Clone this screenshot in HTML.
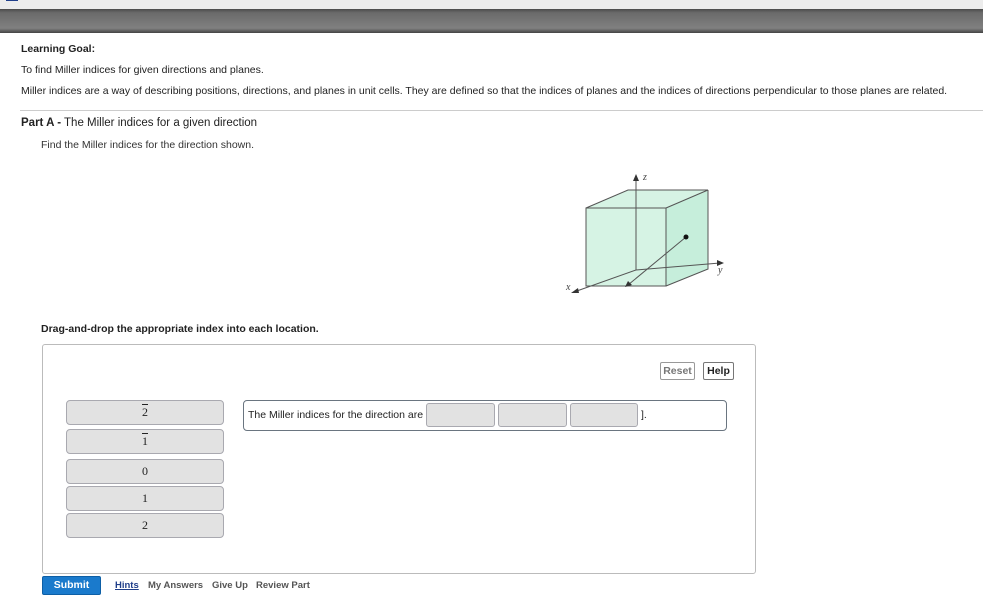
<!DOCTYPE html>
<html><head><style>
body{margin:0;width:983px;height:606px;overflow:hidden;background:#fff;font-family:"Liberation Sans",Arial,sans-serif;position:relative}
.a{position:absolute;white-space:nowrap}
.t{font-size:10.5px;color:#222}
.tile{position:absolute;left:66px;width:156px;height:23px;background:#e2e2e2;border:1px solid #a9a9b0;border-radius:4px;font-family:"Liberation Serif",serif;font-size:12px;text-align:center;line-height:23px;color:#222}
.slot{position:absolute;top:403px;height:22px;background:#e2e2e2;border:1px solid #a9a9b0;border-radius:3px}
.ov{text-decoration:overline}
</style></head><body>
<div class="a" style="left:0;top:0;width:983px;height:9px;background:#ececec"></div>
<div class="a" style="left:6px;top:0;width:12px;height:1px;background:#1f3e8a"></div>
<div class="a" style="left:0;top:9px;width:983px;height:24px;background:linear-gradient(#4a4a4a,#6a6a6a 15%,#808080 80%,#444)"></div>
<div class="a t" style="left:21px;top:43px;font-weight:bold">Learning Goal:</div>
<div class="a t" style="left:21px;top:64px">To find Miller indices for given directions and planes.</div>
<div class="a t" style="left:21px;top:85px">Miller indices are a way of describing positions, directions, and planes in unit cells. They are defined so that the indices of planes and the indices of directions perpendicular to those planes are related.</div>
<div class="a" style="left:20px;top:110px;width:963px;height:1px;background:#ccc"></div>
<div class="a" style="left:21px;top:117px;font-size:11.5px;color:#222"><b>Part A -</b> The Miller indices for a given direction</div>
<div class="a t" style="left:41px;top:139px;color:#333">Find the Miller indices for the direction shown.</div>
<svg class="a" style="left:0;top:0" width="983" height="606">
<polygon points="586,208 628,190 708,190 708,269 666,286 586,286" fill="#d6f3e4"/>
<polygon points="666,208 708,190 708,269 666,286" fill="#c6eedb"/>
<g stroke="#555" stroke-width="1" fill="none">
<polygon points="586,208 666,208 666,286 586,286"/>
<polyline points="586,208 628,190 708,190 666,208"/>
<polyline points="708,190 708,269 666,286"/>
<line x1="636" y1="270" x2="636" y2="178"/>
<line x1="636" y1="270" x2="720" y2="263"/>
<line x1="636" y1="270" x2="574" y2="292"/>
<line x1="686" y1="237" x2="628" y2="285"/>
</g>
<polygon points="636,174 633,181 639,181" fill="#333"/>
<polygon points="724,263 717,260 717,266" fill="#333"/>
<polygon points="571,293 578,288 579,293" fill="#333"/>
<polygon points="625,287 628,281 632,285" fill="#333"/>
<circle cx="686" cy="237" r="2.5" fill="#111"/>
<text x="643" y="180" font-family="Liberation Serif" font-style="italic" font-size="10" fill="#444">z</text>
<text x="718" y="273" font-family="Liberation Serif" font-style="italic" font-size="10" fill="#444">y</text>
<text x="566" y="290" font-family="Liberation Serif" font-style="italic" font-size="10" fill="#444">x</text>
</svg>
<div class="a t" style="left:41px;top:323px;font-weight:bold">Drag-and-drop the appropriate index into each location.</div>
<div class="a" style="left:42px;top:344px;width:712px;height:228px;border:1px solid #bbb;border-radius:3px"></div>
<div class="a" style="left:660px;top:362px;width:33px;height:16px;border:1px solid #999;border-radius:2px;font-size:10.5px;font-weight:bold;color:#777;text-align:center;line-height:16px">Reset</div>
<div class="a" style="left:703px;top:362px;width:29px;height:16px;border:1px solid #777;border-radius:2px;font-size:10.5px;font-weight:bold;color:#222;text-align:center;line-height:16px">Help</div>
<div class="tile" style="top:400px"><span class="ov">2</span></div>
<div class="tile" style="top:429px"><span class="ov">1</span></div>
<div class="tile" style="top:459px">0</div>
<div class="tile" style="top:486px">1</div>
<div class="tile" style="top:513px">2</div>
<div class="a" style="left:243px;top:400px;width:482px;height:29px;border:1px solid #6a7580;border-radius:4px"></div>
<div class="a t" style="left:248px;top:409px">The Miller indices for the direction are [</div>
<div class="slot" style="left:426px;width:67px"></div>
<div class="slot" style="left:498px;width:67px"></div>
<div class="slot" style="left:570px;width:66px"></div>
<div class="a t" style="left:641px;top:409px">].</div>
<div class="a" style="left:42px;top:576px;width:57px;height:17px;background:#1a7acc;border:1px solid #0d5fa6;border-radius:2px;color:#fff;font-size:10.5px;font-weight:bold;text-align:center;line-height:17px">Submit</div>
<div class="a" style="left:115px;top:580px;font-size:9.5px;font-weight:bold;color:#1f3e8a;text-decoration:underline">Hints</div>
<div class="a" style="left:148px;top:580px;font-size:9.5px;font-weight:bold;color:#555">My Answers</div>
<div class="a" style="left:212px;top:580px;font-size:9.5px;font-weight:bold;color:#555">Give Up</div>
<div class="a" style="left:256px;top:580px;font-size:9.5px;font-weight:bold;color:#555">Review Part</div>
</body></html>
